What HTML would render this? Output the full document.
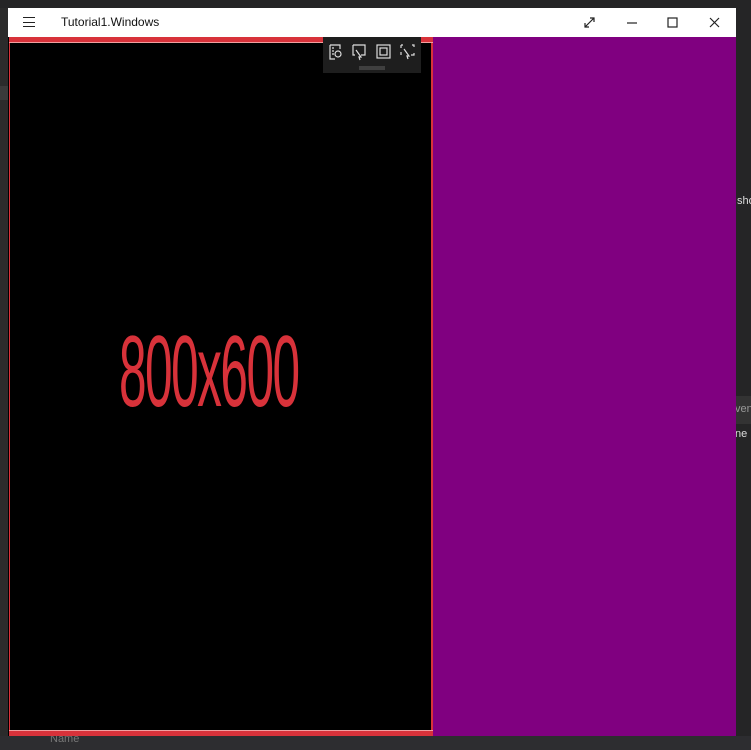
<!DOCTYPE html>
<html><head><style>
body{margin:0;width:751px;height:750px;background:#2b2b2b;position:relative;overflow:hidden;font-family:"Liberation Sans",sans-serif}
.a{position:absolute}
</style></head><body>
<div class="a" style="left:0;top:0;width:751px;height:8px;background:#252526"></div>
<div class="a" style="left:0;top:86px;width:8px;height:14px;background:#3a3a3a"></div>
<div class="a" style="left:736px;top:0;width:15px;height:750px;background:#252526"></div>
<div class="a" style="left:737px;top:195px;width:14px;font-size:11px;color:#ddd">sho</div>
<div class="a" style="left:736px;top:396px;width:15px;height:28px;background:#333"></div>
<div class="a" style="left:735px;top:403px;font-size:11px;color:#999">ven</div>
<div class="a" style="left:735px;top:428px;font-size:11px;color:#ddd">ne</div>
<div class="a" style="left:0;top:736px;width:751px;height:14px;background:#2d2d30"></div>
<div class="a" style="left:50px;top:733px;font-size:11px;color:#777">Name</div>
<!-- window -->
<div class="a" style="left:8px;top:8px;width:728px;height:29px;background:#fff"></div>
<div class="a" style="left:23px;top:17px;width:12px;height:10px;border-top:1.5px solid #222;border-bottom:1.5px solid #222;box-sizing:border-box"></div>
<div class="a" style="left:23px;top:21.5px;width:12px;height:1.5px;background:#222"></div>
<div class="a" style="left:61px;top:15px;font-size:12px;color:#111">Tutorial1.Windows</div>
<svg class="a" style="left:580px;top:14px" width="150" height="16" viewBox="0 0 150 16" fill="none" stroke="#222" stroke-width="1.2">
<path d="M5 13L14 4M10 4H14V8M5 9V13H9"/>
<path d="M47 9H57"/>
<rect x="88" y="4" width="9" height="9"/>
<path d="M130 4L139 13M139 4L130 13"/>
</svg>
<div class="a" style="left:8px;top:37px;width:425px;height:699px;background:#000"></div>
<div class="a" style="left:433px;top:37px;width:303px;height:699px;background:#800080"></div>
<div class="a" style="left:9px;top:38px;width:1px;height:695px;background:#d8323a"></div>
<div class="a" style="left:431px;top:38px;width:1.5px;height:695px;background:#d8323a"></div>
<div class="a" style="left:9px;top:37px;width:424px;height:5px;background:#d8323a;border-bottom:1px solid #f0a0a0"></div>
<div class="a" style="left:9px;top:730px;width:424px;height:5px;background:#d8323a;border-top:1px solid #f0a0a0"></div>
<div class="a" style="left:323px;top:37px;width:98px;height:36px;background:#1e1e1e"></div>
<svg class="a" style="left:323px;top:37px" width="98" height="36" viewBox="0 0 98 36" fill="none" stroke="#ddd" stroke-width="1.2">
<path d="M7 8H17V12M7 8V22H12M9 11H11M9 14H11M9 17H11"/>
<circle cx="15" cy="17" r="3"/>
<path d="M30 8H42V18H38M30 8V18H32M33 13L38 20L36 20L37 23"/>
<rect x="54" y="8" width="13" height="13"/><rect x="57" y="11" width="7" height="7"/>
<path d="M78 8H80M89 8H91V10M91 16V18H88M78 8V11M78 15V18M81 12L86 19L84 19L85 22"/>
<path d="M36 30H62M36 32H62" stroke="#777" stroke-width="0.8"/>
</svg>
<div class="a" style="left:119px;top:322px;width:180px;height:100px;overflow:visible">
<div style="font-size:101px;line-height:100px;color:#d8323a;transform:scaleX(0.49);transform-origin:0 0;white-space:nowrap;letter-spacing:-3px">800x600</div>
</div>
</body></html>
